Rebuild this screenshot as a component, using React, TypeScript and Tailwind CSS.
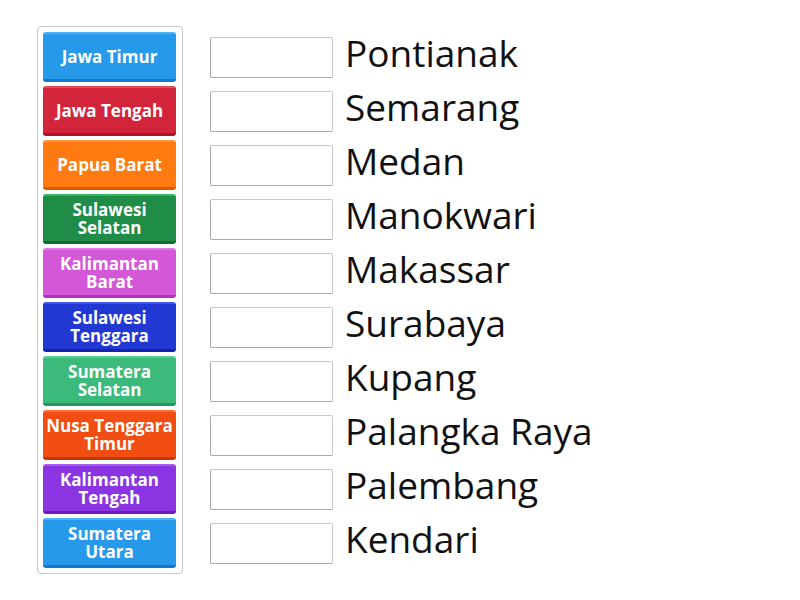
import React from "react";

type Tile = { label: string[]; bg: string; top: string; bottom: string };

const tiles: Tile[] = [
  { label: ["Jawa Timur"], bg: "#2699ea", top: "#4db1f2", bottom: "#1479cc" },
  { label: ["Jawa Tengah"], bg: "#d2253b", top: "#e04a5c", bottom: "#a8142a" },
  { label: ["Papua Barat"], bg: "#ff7a10", top: "#ff9640", bottom: "#d85e00" },
  { label: ["Sulawesi", "Selatan"], bg: "#1f8d48", top: "#35b862", bottom: "#136b33" },
  { label: ["Kalimantan", "Barat"], bg: "#d457d8", top: "#e07ae2", bottom: "#b232bc" },
  { label: ["Sulawesi", "Tenggara"], bg: "#2238d2", top: "#4256e2", bottom: "#1424a8" },
  { label: ["Sumatera", "Selatan"], bg: "#3cba7b", top: "#5acd92", bottom: "#27965c" },
  { label: ["Nusa Tenggara", "Timur"], bg: "#f24d12", top: "#ff7038", bottom: "#c43a04" },
  { label: ["Kalimantan", "Tengah"], bg: "#8a34e2", top: "#a35cec", bottom: "#6a1cc0" },
  { label: ["Sumatera", "Utara"], bg: "#2699ea", top: "#4db1f2", bottom: "#1479cc" },
];

const cities = [
  "Pontianak",
  "Semarang",
  "Medan",
  "Manokwari",
  "Makassar",
  "Surabaya",
  "Kupang",
  "Palangka Raya",
  "Palembang",
  "Kendari",
];

export default function App() {
  return (
    <div
      className="w-[800px] h-[600px] bg-white flex items-start pl-[37px] pt-[26px]"
      style={{ fontFamily: '"Open Sans", "Noto Sans", sans-serif' }}
    >
      <div className="w-[146px] border border-[#c6c6c6] rounded-[4px] pt-[5px] pb-[5px] pl-[5px] pr-[6px] flex flex-col gap-[4px]">
        {tiles.map((t, i) => (
          <div
            key={i}
            className="h-[50px] w-[133px] rounded-[3px] flex flex-col items-center justify-center text-white font-bold text-[17px] leading-[18px] text-center border-t-2 border-b-[3px] whitespace-nowrap"
            style={{
              backgroundColor: t.bg,
              borderTopColor: t.top,
              borderBottomColor: t.bottom,
            }}
          >
            {t.label.map((l, j) => (
              <span key={j}>{l}</span>
            ))}
          </div>
        ))}
      </div>
      <div className="ml-[27px] pt-[6px] flex flex-col gap-[4px]">
        {cities.map((c, i) => (
          <div key={i} className="h-[50px] flex items-center">
            <div className="w-[123px] h-[41px] bg-white border border-[#c9c9c9] border-l-[#a8a8a8] border-b-[#a8a8a8] rounded-[2px]" />
            <span className="ml-[12px] text-[37px] leading-[50px] text-[#111] pb-[8px] whitespace-nowrap">
              {c}
            </span>
          </div>
        ))}
      </div>
    </div>
  );
}
